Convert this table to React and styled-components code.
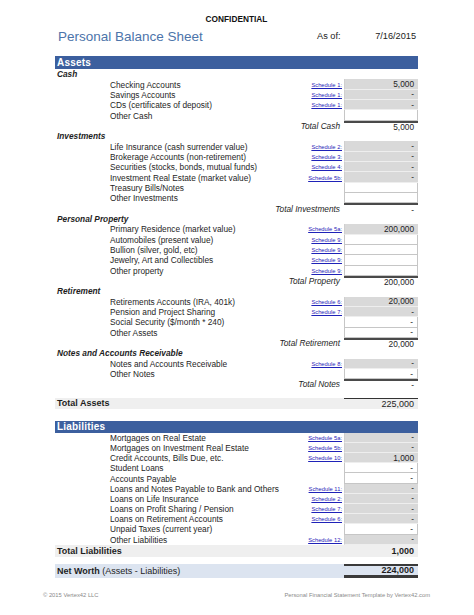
import React from "react";
import styled, { createGlobalStyle, css } from "styled-components";

const GlobalStyle = createGlobalStyle`
  html, body { margin: 0; padding: 0; background: #fff; }
  body { font-family: "Liberation Sans", Arial, sans-serif; color: #222; }
`;

const Page = styled.div`
  width: 363px;
  padding: 14px 0 0 55px;
`;

const Confidential = styled.div`
  text-align: center;
  font-weight: bold;
  font-size: 8.3px;
  height: 10px;
  line-height: 10px;
  color: #111;
`;

const TitleRow = styled.div`
  display: flex;
  align-items: center;
  height: 14px;
  margin-top: 5px;
`;

const Title = styled.div`
  flex: 1;
  padding-left: 3px;
  font-size: 13.5px;
  color: #4c74aa;
  white-space: nowrap;
`;

const AsOf = styled.div`
  width: 55px;
  font-size: 9.2px;
  color: #222;
`;

const DateText = styled.div`
  width: 44px;
  text-align: right;
  font-size: 9.2px;
  padding-right: 2px;
  color: #222;
`;

const SectionBar = styled.div`
  margin-top: ${(p) => p.$top}px;
  height: ${(p) => p.$h}px;
  background: #3c5f9e;
  color: #fff;
  font-weight: bold;
  font-size: 10px;
  line-height: ${(p) => p.$h}px;
  padding-left: 2px;
  letter-spacing: 0.2px;
`;

const Row = styled.div`
  display: flex;
  align-items: stretch;
  height: ${(p) => p.$h || 10.35}px;
  margin-top: ${(p) => p.$top || 0}px;
  ${(p) =>
    p.$band &&
    css`
      background: ${p.$band};
    `}
`;

const Label = styled.div`
  flex: 1;
  display: flex;
  align-items: center;
  padding-left: ${(p) => p.$indent}px;
  font-size: ${(p) => p.$size || 8.3}px;
  font-style: ${(p) => (p.$italic ? "italic" : "normal")};
  font-weight: ${(p) => (p.$bold ? "bold" : "normal")};
  white-space: nowrap;
  color: #1e1e1e;
`;

const Normal = styled.span`
  font-weight: normal;
`;

const Link = styled.a`
  align-self: center;
  font-size: 5.8px;
  color: #1f22b8;
  text-decoration: underline;
  padding-right: 1px;
  white-space: nowrap;
`;

const TotalLabel = styled.div`
  align-self: center;
  font-size: 8.3px;
  font-style: italic;
  padding-right: 3px;
  color: #1e1e1e;
`;

const cellStyles = {
  gray: css`
    background: #d9d9d9;
    border-bottom: 1px solid #eeeeee;
    border-left: 1px solid #cfcfcf;
  `,
  input: css`
    background: #fff;
    border: 1px solid #c6c6c6;
    border-top: none;
  `,
  total: css`
    border-top: 2px solid #4a4a4a;
  `,
  grand: css`
    border-top: 1px solid #333;
  `,
  net: css`
    border-top: 2px solid #3a3a3a;
    border-bottom: 3px solid #3a3a3a;
  `,
  plain: css``,
};

const Value = styled.div`
  box-sizing: border-box;
  width: 74px;
  margin-left: 1px;
  display: flex;
  align-items: center;
  justify-content: flex-end;
  padding-right: 4px;
  font-size: ${(p) => p.$size || 8.3}px;
  font-weight: ${(p) => (p.$bold ? "bold" : "normal")};
  color: #1e1e1e;
  ${(p) => cellStyles[p.$kind || "plain"]}
`;

const Footer = styled.div`
  display: flex;
  justify-content: space-between;
  margin: 14px 0 0 -12px;
  width: 387px;
  font-size: 5.8px;
  color: #8a8a8a;
`;

const assets = [
  {
    title: "Cash",
    total: ["Total Cash", "5,000"],
    items: [
      ["Checking Accounts", "Schedule 1:", "gray", "5,000"],
      ["Savings Accounts", "Schedule 1:", "gray", "-"],
      ["CDs (certificates of deposit)", "Schedule 1:", "gray", "-"],
      ["Other Cash", "", "input", ""],
    ],
  },
  {
    title: "Investments",
    total: ["Total Investments", "-"],
    items: [
      ["Life Insurance (cash surrender value)", "Schedule 2:", "gray", "-"],
      ["Brokerage Accounts (non-retirement)", "Schedule 3:", "gray", "-"],
      ["Securities (stocks, bonds, mutual funds)", "Schedule 4:", "gray", "-"],
      ["Investment Real Estate (market value)", "Schedule 5b:", "gray", "-"],
      ["Treasury Bills/Notes", "", "input", ""],
      ["Other Investments", "", "input", ""],
    ],
  },
  {
    title: "Personal Property",
    total: ["Total Property", "200,000"],
    items: [
      ["Primary Residence (market value)", "Schedule 5a:", "gray", "200,000"],
      ["Automobiles (present value)", "Schedule 9:", "input", ""],
      ["Bullion (silver, gold, etc)", "Schedule 9:", "input", ""],
      ["Jewelry, Art and Collectibles", "Schedule 9:", "input", ""],
      ["Other property", "Schedule 9:", "input", ""],
    ],
  },
  {
    title: "Retirement",
    total: ["Total Retirement", "20,000"],
    items: [
      ["Retirements Accounts (IRA, 401k)", "Schedule 6:", "gray", "20,000"],
      ["Pension and Project Sharing", "Schedule 7:", "gray", "-"],
      ["Social Security ($/month * 240)", "", "input", "-"],
      ["Other Assets", "", "input", "-"],
    ],
  },
  {
    title: "Notes and Accounts Receivable",
    total: ["Total Notes", "-"],
    items: [
      ["Notes and Accounts Receivable", "Schedule 8:", "gray", "-"],
      ["Other Notes", "", "input", "-"],
    ],
  },
];

const liabilities = [
  ["Mortgages on Real Estate", "Schedule 5a:", "gray", "-"],
  ["Mortgages on Investment Real Estate", "Schedule 5b:", "gray", "-"],
  ["Credit Accounts, Bills Due, etc.", "Schedule 10:", "gray", "1,000"],
  ["Student Loans", "", "input", "-"],
  ["Accounts Payable", "", "input", "-"],
  ["Loans and Notes Payable to Bank and Others", "Schedule 11:", "gray", "-"],
  ["Loans on Life Insurance", "Schedule 2:", "gray", "-"],
  ["Loans on Profit Sharing / Pension", "Schedule 7:", "gray", "-"],
  ["Loans on Retirement Accounts", "Schedule 6:", "gray", "-"],
  ["Unpaid Taxes (current year)", "", "input", "-"],
  ["Other Liabilities", "Schedule 12:", "gray", "-"],
];

function ItemRow({ item, h }) {
  const [label, link, kind, value] = item;
  return (
    <Row $h={h}>
      <Label $indent={55}>{label}</Label>
      {link && <Link href="#">{link}</Link>}
      <Value $kind={kind}>{value}</Value>
    </Row>
  );
}

export default function App() {
  return (
    <>
      <GlobalStyle />
      <Page>
        <Confidential>CONFIDENTIAL</Confidential>
        <TitleRow>
          <Title>Personal Balance Sheet</Title>
          <AsOf>As of:</AsOf>
          <DateText>7/16/2015</DateText>
        </TitleRow>

        <SectionBar $top={13} $h={13}>Assets</SectionBar>
        {assets.map((group) => (
          <React.Fragment key={group.title}>
            <Row>
              <Label $indent={2} $italic $bold>
                {group.title}
              </Label>
            </Row>
            {group.items.map((it) => (
              <ItemRow key={it[0]} item={it} />
            ))}
            <Row>
              <Label $indent={0} />
              <TotalLabel>{group.total[0]}</TotalLabel>
              <Value $kind="total">{group.total[1]}</Value>
            </Row>
          </React.Fragment>
        ))}

        <Row $top={8} $h={11.5} $band="#efefef">
          <Label $indent={2} $bold $size={9}>
            Total Assets
          </Label>
          <Value $kind="grand" $size={9}>
            225,000
          </Value>
        </Row>

        <SectionBar $top={11.5} $h={12}>Liabilities</SectionBar>
        {liabilities.map((it) => (
          <ItemRow key={it[0]} item={it} h={10.2} />
        ))}

        <Row $h={12} $band="#efefef">
          <Label $indent={2} $bold $size={9}>
            Total Liabilities
          </Label>
          <Value $bold $size={9}>
            1,000
          </Value>
        </Row>

        <Row $top={7} $h={14} $band="#dce4f0">
          <Label $indent={2} $bold $size={9}>
            Net Worth&nbsp;<Normal>(Assets - Liabilities)</Normal>
          </Label>
          <Value $kind="net" $bold $size={9}>
            224,000
          </Value>
        </Row>

        <Footer>
          <span>© 2015 Vertex42 LLC</span>
          <span>Personal Financial Statement Template by Vertex42.com</span>
        </Footer>
      </Page>
    </>
  );
}
